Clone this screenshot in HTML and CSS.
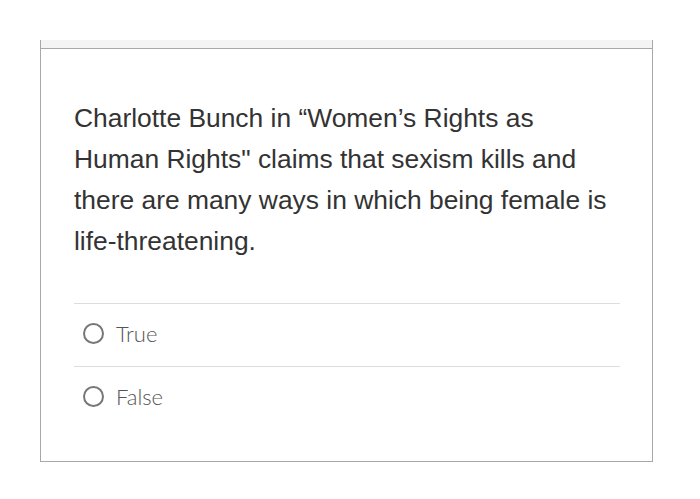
FILE: index.html
```html
<!DOCTYPE html>
<html>
<head>
<meta charset="utf-8">
<link rel="stylesheet" href="styles.css">
</head>
<body>
<div class="card">
  <div class="card-header"></div>
  <div class="card-body">
    <p class="question">Charlotte Bunch in “Women’s Rights as Human Rights" claims that sexism kills and there are many ways in which being female is life-threatening.</p>
    <div class="answers">
      <label class="answer"><span class="radio"></span><span class="answer-text">True</span></label>
      <label class="answer"><span class="radio"></span><span class="answer-text">False</span></label>
    </div>
  </div>
</div>
</body>
</html>
```

FILE: styles.css
```css
html, body {
  margin: 0;
  padding: 0;
  background: #ffffff;
}
body {
  padding: 40px 0 0 40px;
}
.card {
  width: 611px;
  border-left: 1px solid #a8a8a8;
  border-right: 1px solid #a8a8a8;
  border-bottom: 1px solid #a8a8a8;
  background: #fff;
}
.card-header {
  height: 8px;
  background: #f4f4f4;
  border-bottom: 1px solid #a8a8a8;
}
.card-body {
  padding: 49px 32px 32px 33px;
}
.question {
  margin: 0;
  font-family: "Liberation Sans", Arial, sans-serif;
  font-size: 26.4px;
  line-height: 41px;
  color: #333333;
}
.answers {
  margin-top: 41px;
}
.answer {
  display: flex;
  align-items: center;
  height: 59px;
  padding-bottom: 3px;
  border-top: 1px solid #dddddd;
  padding-left: 9px;
  gap: 12px;
}
.radio {
  width: 17px;
  height: 17px;
  border: 2px solid #777777;
  border-radius: 50%;
  box-sizing: content-box;
  flex: none;
}
.answer-text {
  font-family: Lato, "Open Sans", sans-serif;
  font-weight: 300;
  font-size: 22px;
  color: #555555;
}
```
